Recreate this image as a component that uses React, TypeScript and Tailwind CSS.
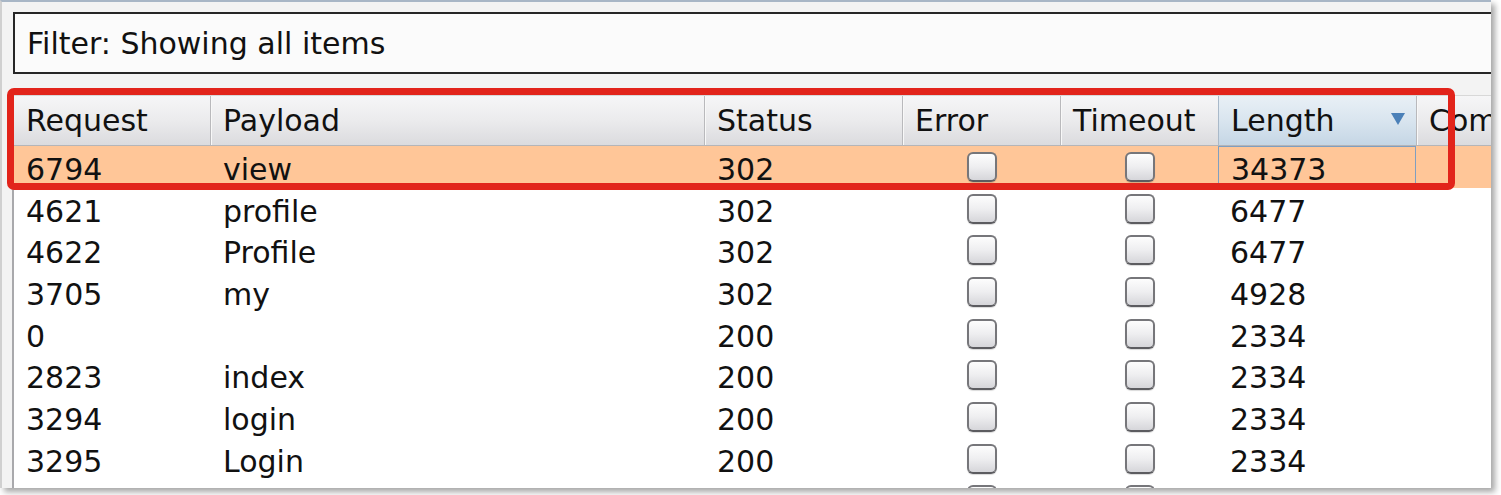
import React from "react";

type Row = { req: string; payload: string; status: string; length: string; selected?: boolean };

const rows: Row[] = [
  { req: "6794", payload: "view", status: "302", length: "34373", selected: true },
  { req: "4621", payload: "profile", status: "302", length: "6477" },
  { req: "4622", payload: "Profile", status: "302", length: "6477" },
  { req: "3705", payload: "my", status: "302", length: "4928" },
  { req: "0", payload: "", status: "200", length: "2334" },
  { req: "2823", payload: "index", status: "200", length: "2334" },
  { req: "3294", payload: "login", status: "200", length: "2334" },
  { req: "3295", payload: "Login", status: "200", length: "2334" },
  { req: "", payload: "", status: "", length: "" },
];

function Checkbox() {
  return (
    <div className="h-[30px] w-[30px] shrink-0 rounded-[6px] border-2 border-[#76767a] border-b-[#5c5c60] bg-linear-to-b from-[#fdfdfd] via-[#eeeef0] to-[#d6d6da] shadow-[0_1px_1px_rgba(0,0,0,0.15)]" />
  );
}

const headCell =
  "flex items-center h-full pl-[12px] border-l border-[#b9b9bc] shadow-[inset_1px_0_0_#f8f8f8]";

export default function App() {
  return (
    <div
      className="relative h-[495px] w-[1501px] overflow-hidden bg-white text-black"
      style={{ fontFamily: '"DejaVu Sans", "Liberation Sans", sans-serif' }}
    >
      <div className="flex h-[488px] w-[1491px] flex-col overflow-hidden border-t-2 border-l-2 border-[#a8b6c6] border-l-[#d0d0d0] bg-[#f3f3f3] shadow-[4px_4px_6px_rgba(0,0,0,0.35)]">
        {/* filter */}
        <div className="mt-[10px] ml-[11px] flex h-[62px] shrink-0 items-center border-2 border-r-0 border-[#262626] bg-[#fbfbfb] pl-[12px] text-[30px] text-[#111]">
          Filter: Showing all items
        </div>
        {/* table */}
        <div className="mt-[21px] ml-[10px] flex min-h-0 flex-1 flex-col overflow-hidden border-l-2 border-[#a9a9ac] bg-white text-[30px] text-[#111]">
          {/* header */}
          <div className="flex h-[51px] shrink-0 border-b border-t border-[#b5b5b8] border-t-[#d8d8d8] bg-linear-to-b from-[#f6f6f7] via-[#ebebed] to-[#dbdbde]">
            <div className="flex h-full w-[196px] items-center pl-[12px]">Request</div>
            <div className={`${headCell} w-[494px]`}>Payload</div>
            <div className={`${headCell} w-[198px]`}>Status</div>
            <div className={`${headCell} w-[158px]`}>Error</div>
            <div className={`${headCell} w-[158px]`}>Timeout</div>
            <div className="flex h-full w-[198px] items-center justify-between border-l border-[#a9b9c9] bg-linear-to-b from-[#e9f0f6] via-[#d9e5ef] to-[#c5d6e5] pl-[12px] pr-[10px]">
              <span>Length</span>
              <svg width="16" height="14" viewBox="0 0 16 14" className="mb-[4px]">
                <path d="M1 1 H15 L8 13 Z" fill="#4b80b8" />
              </svg>
            </div>
            <div className={`${headCell} min-w-0 flex-1 overflow-hidden whitespace-nowrap`}>Com</div>
          </div>
          {/* rows */}
          {rows.map((r, i) => (
            <div
              key={i}
              className={`flex h-[41.7px] shrink-0 items-center ${r.selected ? "bg-[#ffc698]" : "bg-white"}`}
            >
              <div className="w-[196px] pl-[12px] pt-[6px] leading-none">{r.req}</div>
              <div className="w-[494px] pl-[13px] pt-[6px] leading-none">{r.payload}</div>
              <div className="w-[198px] pl-[13px] pt-[6px] leading-none">{r.status}</div>
              <div className="flex w-[158px] justify-center pl-[2px]">
                <Checkbox />
              </div>
              <div className="flex w-[158px] justify-center pl-[2px]">
                <Checkbox />
              </div>
              <div
                className={`flex h-full w-[198px] items-center pl-[12px] leading-none ${
                  r.selected ? "border border-[#7f9ec0] pt-[7px]" : "pt-[6px]"
                }`}
              >
                {r.length}
              </div>
              <div className="flex-1" />
            </div>
          ))}
        </div>
      </div>
      {/* red annotation box */}
      <div className="pointer-events-none absolute left-[7px] top-[88px] h-[102px] w-[1448px] rounded-[7px] border-[7px] border-[#e2241b]" />
    </div>
  );
}
